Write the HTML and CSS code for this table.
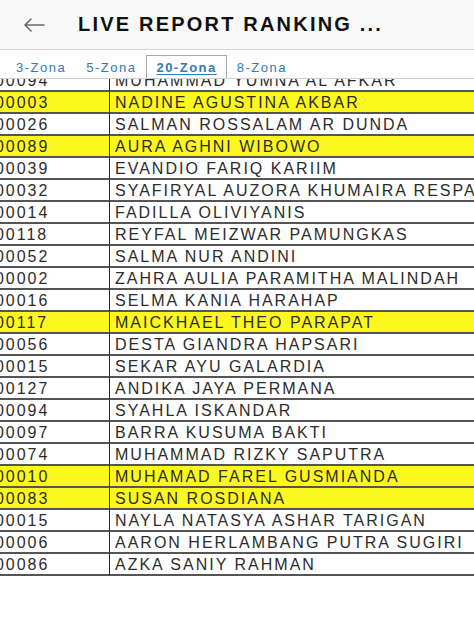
FILE: index.html
```html
<!DOCTYPE html>
<html lang="id">
<head>
<meta charset="utf-8">
<title>Live Report Ranking</title>
<link rel="stylesheet" href="styles.css">
</head>
<body>
<div class="app">
  <header class="topbar">
    <svg class="back" width="22" height="14" viewBox="0 0 22 14" aria-hidden="true">
      <path d="M21 7H2 M8 1 L2 7 L8 13" fill="none" stroke="#6a6a6a" stroke-width="1.6" stroke-linecap="round" stroke-linejoin="round"/>
    </svg>
    <h1 class="title">LIVE REPORT RANKING ...</h1>
  </header>
  <nav class="tabs">
    <span class="tab">3-Zona</span>
    <span class="tab">5-Zona</span>
    <span class="tab active">20-Zona</span>
    <span class="tab">8-Zona</span>
  </nav>
  <div class="sheet">
    <table class="grid">
      <tbody>
        <tr><td class="id">000094</td><td class="name">MUHAMMAD YUMNA AL AFKAR</td></tr>
        <tr class="hl"><td class="id">000003</td><td class="name">NADINE AGUSTINA AKBAR</td></tr>
        <tr><td class="id">000026</td><td class="name">SALMAN ROSSALAM AR DUNDA</td></tr>
        <tr class="hl"><td class="id">000089</td><td class="name">AURA AGHNI WIBOWO</td></tr>
        <tr><td class="id">000039</td><td class="name">EVANDIO FARIQ KARIIM</td></tr>
        <tr><td class="id">000032</td><td class="name">SYAFIRYAL AUZORA KHUMAIRA RESPATI</td></tr>
        <tr><td class="id">000014</td><td class="name">FADILLA OLIVIYANIS</td></tr>
        <tr><td class="id">000118</td><td class="name">REYFAL MEIZWAR PAMUNGKAS</td></tr>
        <tr><td class="id">000052</td><td class="name">SALMA NUR ANDINI</td></tr>
        <tr><td class="id">000002</td><td class="name">ZAHRA AULIA PARAMITHA MALINDAH</td></tr>
        <tr><td class="id">000016</td><td class="name">SELMA KANIA HARAHAP</td></tr>
        <tr class="hl"><td class="id">000117</td><td class="name">MAICKHAEL THEO PARAPAT</td></tr>
        <tr><td class="id">000056</td><td class="name">DESTA GIANDRA HAPSARI</td></tr>
        <tr><td class="id">000015</td><td class="name">SEKAR AYU GALARDIA</td></tr>
        <tr><td class="id">000127</td><td class="name">ANDIKA JAYA PERMANA</td></tr>
        <tr><td class="id">000094</td><td class="name">SYAHLA ISKANDAR</td></tr>
        <tr><td class="id">000097</td><td class="name">BARRA KUSUMA BAKTI</td></tr>
        <tr><td class="id">000074</td><td class="name">MUHAMMAD RIZKY SAPUTRA</td></tr>
        <tr class="hl"><td class="id">000010</td><td class="name">MUHAMAD FAREL GUSMIANDA</td></tr>
        <tr class="hl"><td class="id">000083</td><td class="name">SUSAN ROSDIANA</td></tr>
        <tr><td class="id">000015</td><td class="name">NAYLA NATASYA ASHAR TARIGAN</td></tr>
        <tr><td class="id">000006</td><td class="name">AARON HERLAMBANG PUTRA SUGIRI</td></tr>
        <tr><td class="id">000086</td><td class="name">AZKA SANIY RAHMAN</td></tr>
      </tbody>
    </table>
  </div>
</div>
</body>
</html>
```
FILE: styles.css
```css
html, body {
  margin: 0;
  padding: 0;
  background: #ffffff;
  overflow: hidden;
}

.app {
  width: 474px;
  height: 632px;
  overflow: hidden;
  font-family: "Liberation Sans", Arial, sans-serif;
}

.topbar {
  height: 49px;
  background: #f8f8f8;
  border-bottom: 1px solid #d6d6d6;
  display: flex;
  align-items: center;
  box-sizing: content-box;
}

.back {
  margin-left: 23px;
  margin-top: 1px;
  flex: none;
}

.title {
  margin: 0 0 0 33px;
  font-size: 20px;
  font-weight: bold;
  letter-spacing: 2.2px;
  color: #111111;
  white-space: nowrap;
}

.tabs {
  height: 23px;
  padding: 5px 0 0 6px;
  border-bottom: 1px solid #cfcfcf;
  display: flex;
  align-items: stretch;
  background: #ffffff;
  position: relative;
  z-index: 1;
}

.tab {
  display: flex;
  align-items: center;
  padding: 1px 9px 0 9px;
  border: 1px solid transparent;
  border-bottom: none;
  font-size: 13px;
  letter-spacing: 1.5px;
  color: #2f7bb5;
}

.tab.active {
  border-color: #a9a9a9;
  font-weight: bold;
  text-decoration: underline;
  text-underline-offset: 2px;
}

.sheet {
  overflow: hidden;
}

.grid {
  margin-top: -9px;
  margin-left: -20px;
  border-collapse: separate;
  border-spacing: 0;
  width: 640px;
  table-layout: fixed;
  font-size: 16px;
  letter-spacing: 2px;
  color: #2c2c2c;
}

.grid td {
  height: 19px;
  line-height: 19px;
  padding: 1px 0 0 0;
  border-bottom: 2px solid #555555;
  white-space: nowrap;
  overflow: hidden;
}

.grid td.id {
  width: 125px;
  padding-left: 4px;
  border-right: 1px solid #2a2a2a;
}

.grid td.name {
  padding-left: 5px;
}

.grid tr.hl td {
  background: #fcf81e;
}
```
